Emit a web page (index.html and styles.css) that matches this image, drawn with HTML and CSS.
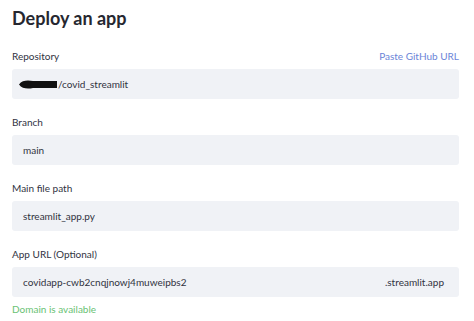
FILE: index.html
```html
<!DOCTYPE html>
<html lang="en">
<head>
    <meta charset="UTF-8">
    <title>Deploy an app</title>
    <link rel="stylesheet" href="styles.css">
</head>
<body>
    <div class="deploy">
        <h1 class="title">Deploy an app</h1>

        <div class="field">
            <div class="label-row">
                <label>Repository</label>
                <a class="link" href="#">Paste GitHub URL</a>
            </div>
            <div class="input">
                <svg class="redact" width="40" height="11" viewBox="0 0 40 11">
                    <path d="M1 5.5 C4 1 10 1 15 2 L39 2 L39 9 L15 9 C10 10 4 10 1 5.5 Z" fill="#111"/>
                </svg><span>/covid_streamlit</span>
            </div>
        </div>

        <div class="field">
            <div class="label-row"><label>Branch</label></div>
            <div class="input"><span>main</span></div>
        </div>

        <div class="field">
            <div class="label-row"><label>Main file path</label></div>
            <div class="input"><span>streamlit_app.py</span></div>
        </div>

        <div class="field">
            <div class="label-row"><label>App URL (Optional)</label></div>
            <div class="input url">
                <span>covidapp-cwb2cnqjnowj4muweipbs2</span>
                <span class="suffix">.streamlit.app</span>
            </div>
            <p class="ok">Domain is available</p>
        </div>
    </div>
</body>
</html>
```

FILE: styles.css
```css
body{
    margin: 0;
    background: #fff;
    font-family: Lato, "Noto Sans", sans-serif;
    color: #31333f;
}
.deploy{
    padding: 0 15px 0 12px;
}
.title{
    margin: 0;
    padding-top: 5px;
    height: 43px;
    font-size: 18px;
    line-height: 26px;
    font-weight: 700;
    color: #262730;
}
.field{
    margin-bottom: 15px;
}
.label-row{
    display: flex;
    justify-content: space-between;
    align-items: center;
    height: 16px;
    margin-bottom: 5px;
    font-size: 10px;
}
.link{
    color: #6b84d8;
    text-decoration: none;
}
.input{
    display: flex;
    align-items: center;
    height: 30px;
    padding: 0 11px;
    background: #f0f2f6;
    border-radius: 3px;
    font-size: 10px;
}
.redact{
    margin-left: -5px;
}
.url{
    justify-content: space-between;
    padding-right: 15px;
}
.ok{
    margin: 4px 0 0;
    line-height: 16px;
    font-size: 10px;
    color: #69c273;
}
```
